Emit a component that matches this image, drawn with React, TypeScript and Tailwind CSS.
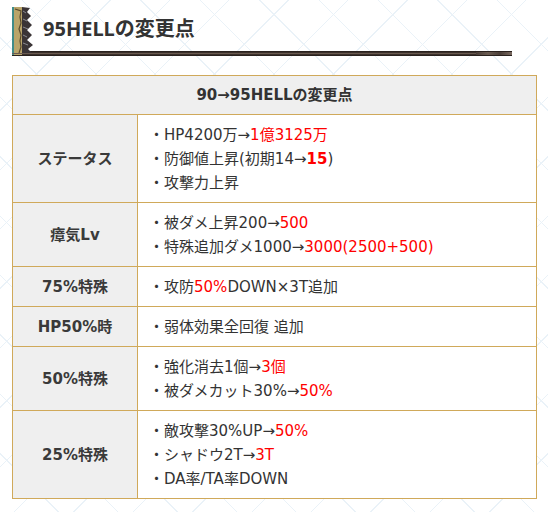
import React from 'react';

type Part = { t: string; red?: boolean; bold?: boolean };
type Row = { label: string; lines: Part[][] };

const rows: Row[] = [
  {
    label: 'ステータス',
    lines: [
      [{ t: 'HP4200万→' }, { t: '1億3125万', red: true }],
      [{ t: '防御値上昇(初期14→' }, { t: '15', red: true, bold: true }, { t: ')' }],
      [{ t: '攻撃力上昇' }],
    ],
  },
  {
    label: '瘴気Lv',
    lines: [
      [{ t: '被ダメ上昇200→' }, { t: '500', red: true }],
      [{ t: '特殊追加ダメ1000→' }, { t: '3000(2500+500)', red: true }],
    ],
  },
  {
    label: '75%特殊',
    lines: [[{ t: '攻防' }, { t: '50%', red: true }, { t: 'DOWN×3T追加' }]],
  },
  {
    label: 'HP50%時',
    lines: [[{ t: '弱体効果全回復 追加' }]],
  },
  {
    label: '50%特殊',
    lines: [
      [{ t: '強化消去1個→' }, { t: '3個', red: true }],
      [{ t: '被ダメカット30%→' }, { t: '50%', red: true }],
    ],
  },
  {
    label: '25%特殊',
    lines: [
      [{ t: '敵攻撃30%UP→' }, { t: '50%', red: true }],
      [{ t: 'シャドウ2T→' }, { t: '3T', red: true }],
      [{ t: 'DA率/TA率DOWN' }],
    ],
  },
];

const Ornament: React.FC = () => (
  <svg width="22" height="48" viewBox="0 0 22 48" className="shrink-0">
    <rect x="0" y="0" width="2" height="48" fill="#3f8c8a" />
    <rect x="2" y="0" width="8" height="48" fill="#b9a56a" />
    <path d="M3 2 L9 4 L8 10 L9 16 L7 22 L9 28 L8 34 L9 40 L7 46" stroke="#5a4a2c" strokeWidth="1.2" fill="none" />
    <path d="M10 0 L18 1 L15 5 L19 9 L15 13 L20 18 L15 23 L20 28 L15 33 L21 38 L16 42 L20 46 L10 48 Z" fill="#3a3436" />
    <path d="M11 4 L14 6 M11 12 L15 14 M11 20 L16 22 M11 28 L15 30 M11 36 L16 38" stroke="#8a8a90" strokeWidth="1" />
  </svg>
);

const font = { fontFamily: '"DejaVu Sans", "Noto Sans CJK JP", sans-serif' };

const App: React.FC = () => {
  return (
    <div className="w-[548px] h-[512px] overflow-hidden bg-white bg-[repeating-linear-gradient(45deg,transparent_0px,transparent_41px,#eaf2f8_41px,#eaf2f8_42px),repeating-linear-gradient(-45deg,transparent_0px,transparent_41px,#eaf2f8_41px,#eaf2f8_42px)] text-[#333]">
      {/* heading */}
      <div className="pt-[7px] pl-3 pr-9">
        <div className="flex items-start">
          <Ornament />
          <h2
            className="pl-[9px] pt-[7px] text-[20px] leading-[30px] font-bold text-[#333]"
            style={{ fontFamily: '"Noto Sans", "Noto Sans CJK JP", sans-serif' }}
          >
            95HELLの変更点
          </h2>
        </div>
        <div className="-mt-[4px] h-[5px] bg-[#3b312c] border-y border-[#2a211d] flex items-center">
          <div className="h-px flex-1 bg-[#6a5a50]" />
          <div className="h-[3px] w-[36px] bg-[linear-gradient(90deg,#4a3e38,#6b5c52,#4a3e38,#7a6a60)]" />
        </div>
      </div>

      {/* table */}
      <div className="mt-[19px] px-3" style={font}>
        <table className="w-[525px] border-collapse text-[15px] bg-white">
          <tbody>
            <tr>
              <th colSpan={2} className="h-[39px] p-0 bg-[#efefef] border border-[#d0a95a] font-bold text-[#333] text-center leading-6">
                90→95HELLの変更点
              </th>
            </tr>
            {rows.map((row) => (
              <tr key={row.label}>
                <th className="w-[125px] p-0 bg-[#efefef] border border-[#d0a95a] font-bold text-center text-[#3a3a3a] leading-6">
                  {row.label}
                </th>
                <td className="border border-[#d0a95a] pl-[11px] py-[7.5px] text-[#333]">
                  {row.lines.map((line, i) => (
                    <div key={i} className="h-6 leading-6 whitespace-nowrap overflow-hidden">
                      ・
                      {line.map((p, j) => (
                        <span key={j} className={`${p.red ? 'text-[#ff0000]' : ''} ${p.bold ? 'font-bold' : ''}`}>
                          {p.t}
                        </span>
                      ))}
                    </div>
                  ))}
                </td>
              </tr>
            ))}
          </tbody>
        </table>
      </div>
    </div>
  );
};

export default App;
